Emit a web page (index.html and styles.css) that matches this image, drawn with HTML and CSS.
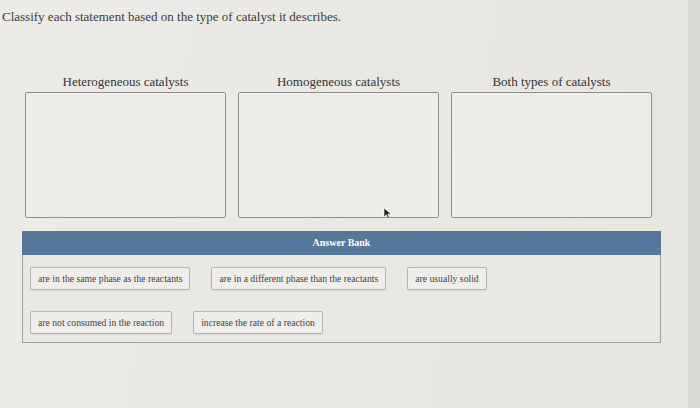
FILE: index.html
```html
<!DOCTYPE html>
<html>
<head>
<meta charset="utf-8">
<link rel="stylesheet" href="styles.css">
</head>
<body>
<div class="page">
  <p class="prompt">Classify each statement based on the type of catalyst it describes.</p>
  <div class="bins">
    <div class="bin">
      <div class="bin-title">Heterogeneous catalysts</div>
      <div class="bin-box"></div>
    </div>
    <div class="bin">
      <div class="bin-title">Homogeneous catalysts</div>
      <div class="bin-box"></div>
    </div>
    <div class="bin">
      <div class="bin-title">Both types of catalysts</div>
      <div class="bin-box"></div>
    </div>
  </div>
  <div class="bank">
    <div class="bank-head">Answer Bank</div>
    <div class="bank-body">
      <div class="bank-row">
        <span class="chip">are in the same phase as the reactants</span>
        <span class="chip">are in a different phase than the reactants</span>
        <span class="chip">are usually solid</span>
      </div>
      <div class="bank-row">
        <span class="chip">are not consumed in the reaction</span>
        <span class="chip">increase the rate of a reaction</span>
      </div>
    </div>
  </div>
  <svg class="cursor" width="9" height="13" viewBox="0 0 9 13"><path d="M1 1 L1 10 L3.3 7.8 L5 11.5 L6.5 10.8 L4.8 7.2 L8 7 Z" fill="#222" stroke="#fff" stroke-width="0.6"/></svg>
  <div class="edge"></div>
</div>
</body>
</html>
```
FILE: styles.css
```css
html, body {
  margin: 0;
  padding: 0;
}
body {
  width: 700px;
  height: 408px;
  overflow: hidden;
  background: linear-gradient(100deg, #ecebe7 0%, #e9e8e4 50%, #e6e5e0 100%);
  font-family: "Liberation Serif", "Times New Roman", serif;
  color: #333;
}
.page {
  position: relative;
  height: 408px;
}
.prompt {
  margin: 0;
  padding: 9px 0 0 2px;
  font-size: 13px;
  line-height: 16px;
  color: #3a3a3a;
}
.bins {
  display: flex;
  gap: 12px;
  margin: 49px 0 0 25px;
}
.bin {
  width: 201px;
  display: flex;
  flex-direction: column;
  align-items: center;
}
.bin-title {
  font-size: 13px;
  line-height: 16px;
  color: #333;
  margin-bottom: 2px;
}
.bin-box {
  width: 201px;
  height: 126px;
  box-sizing: border-box;
  border: 1.5px solid #8e8e8c;
  border-radius: 2px;
  background: #eeede9;
}
.bank {
  margin: 13px 0 0 22px;
  width: 639px;
}
.bank-head {
  height: 24px;
  background: #56789c;
  color: #fff;
  font-size: 10px;
  font-weight: bold;
  text-align: center;
  line-height: 24px;
}
.bank-body {
  height: 88px;
  border: 1px solid #a0a09c;
  border-top: none;
  background: #e9e8e4;
  padding: 12px 0 0 7px;
  box-sizing: border-box;
  display: flex;
  flex-direction: column;
  gap: 21px;
}
.bank-row {
  display: flex;
  gap: 21px;
}
.chip {
  height: 23px;
  box-sizing: border-box;
  padding: 0 7px;
  border: 1px solid #b4b4b0;
  border-radius: 2px;
  background: #efeeea;
  box-shadow: 0 1px 1px rgba(0,0,0,0.08);
  font-size: 9.7px;
  line-height: 21px;
  color: #444;
  white-space: nowrap;
}
.cursor {
  position: absolute;
  left: 383px;
  top: 207px;
}
.edge {
  position: absolute;
  right: 0;
  top: 0;
  width: 12px;
  height: 408px;
  background: #dcdbd6;
}
```
